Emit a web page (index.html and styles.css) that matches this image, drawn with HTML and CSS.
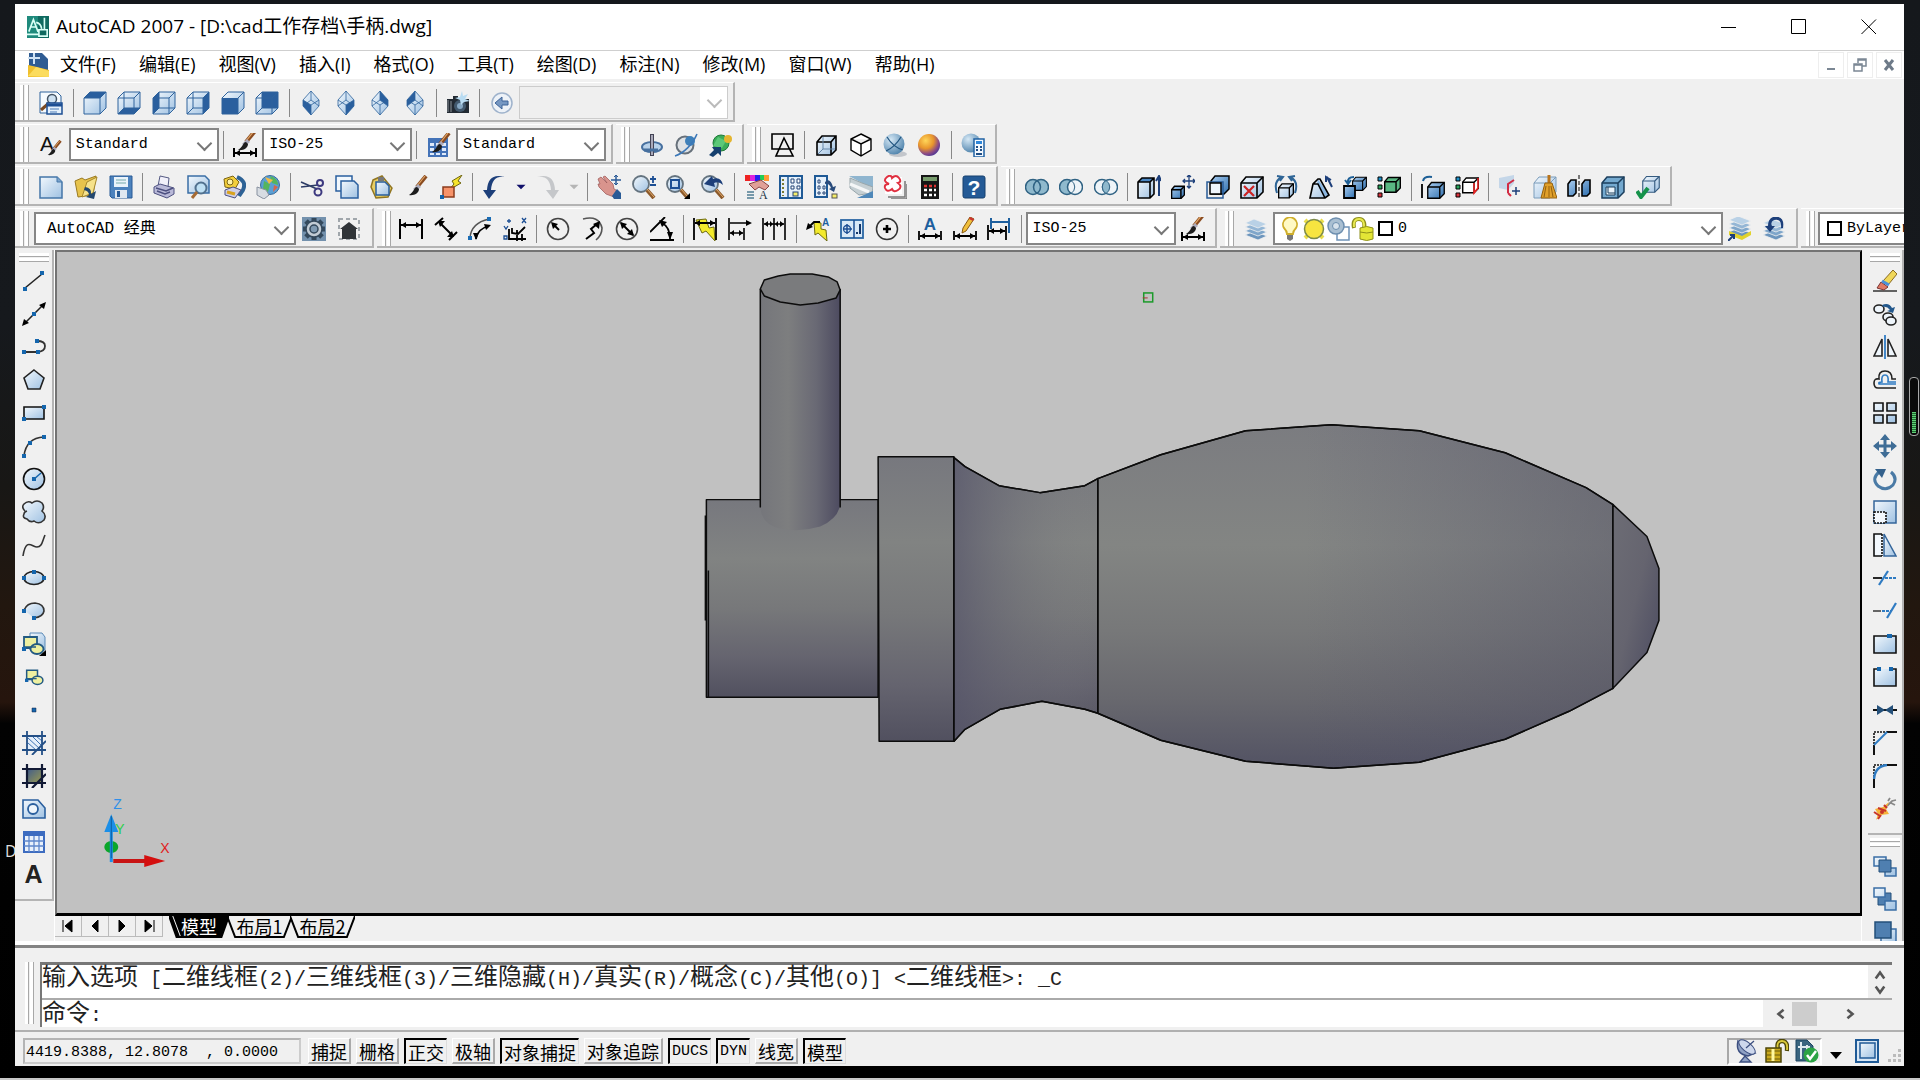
FILE: index.html
```html
<!DOCTYPE html>
<html lang="zh-CN">
<head>
<meta charset="utf-8">
<title>AutoCAD 2007</title>
<link rel="stylesheet" href="styles.css">
</head>
<body>
<svg class="sprite" aria-hidden="true">
<defs>
<linearGradient id="g" x1="0" y1="0" x2="1" y2="1"><stop offset="0" stop-color="#f2f8fd"/><stop offset="1" stop-color="#9fc1e2"/></linearGradient>
<linearGradient id="gb" x1="0" y1="0" x2="1" y2="1"><stop offset="0" stop-color="#a9cdf0"/><stop offset="1" stop-color="#2f6fae"/></linearGradient>
<radialGradient id="gs" cx=".35" cy=".3" r=".75"><stop offset="0" stop-color="#d5e8f5"/><stop offset="1" stop-color="#4f83ac"/></radialGradient>
<radialGradient id="go" cx=".35" cy=".3" r=".8"><stop offset="0" stop-color="#ffd75a"/><stop offset=".45" stop-color="#e8952c"/><stop offset=".75" stop-color="#8a4a86"/><stop offset="1" stop-color="#3a2f9a"/></radialGradient>
<linearGradient id="gh" x1="0" y1="0" x2="1" y2="1"><stop offset="0" stop-color="#4c6fb8"/><stop offset="1" stop-color="#f2e34a"/></linearGradient>
</defs>
<symbol id="cube" viewBox="0 0 24 24"><path d="M1 7 7 1H23V17L17 23H1Z" fill="url(#g)"/></symbol>
<symbol id="cubel" viewBox="0 0 24 24"><path d="M1 7 7 1H23V17L17 23H1ZM1 7H17V23M17 7 23 1M7 1V17H23M7 17 1 23" fill="none" stroke="#2f639c"/></symbol>
<symbol id="iso" viewBox="0 0 24 24"><path d="M12 0 20 9V15L12 24 4 15V9Z" fill="url(#g)"/></symbol>
<symbol id="isol" viewBox="0 0 24 24"><path d="M12 0 20 9V15L12 24 4 15V9ZM4 9 12 14 20 9M12 14V24M4 15 12 9 20 15M12 0V9" fill="none" stroke="#2f639c" stroke-width=".8"/></symbol>
<symbol id="v0" viewBox="0 0 24 24"><path d="M1 1H18L22 5V22H1Z" fill="#f5fafe" stroke="#2f639c"/><circle cx="13" cy="8" r="4.500" fill="#cfe2f2" stroke="#456" stroke-width="1.500"/><path d="M10 12 2 19" stroke="#7a4a22" stroke-width="3"/><path d="M8 12H23V23H8Z" fill="#e4f0fb" stroke="#1d4f94" stroke-width="1.500"/><path d="M8 14H23" stroke="#1d4f94" stroke-width="3"/><path d="M11 18H20M11 21H18" stroke="#4c7db8"/></symbol>
<symbol id="v1" viewBox="0 0 24 24"><use href="#cube"/><path d="M1 7 7 1H23L17 7Z" fill="#2a5f9e"/><path d="M1 7 7 1H23V17L17 23H1ZM1 7H17V23M17 7 23 1" fill="none" stroke="#2f639c"/></symbol>
<symbol id="v2" viewBox="0 0 24 24"><use href="#cube"/><path d="M1 23 7 17H23L17 23Z" fill="#2a5f9e"/><use href="#cubel"/></symbol>
<symbol id="v3" viewBox="0 0 24 24"><use href="#cube"/><path d="M1 7 7 1V17L1 23Z" fill="#2a5f9e"/><use href="#cubel"/></symbol>
<symbol id="v4" viewBox="0 0 24 24"><use href="#cube"/><path d="M17 7 23 1V17L17 23Z" fill="#2a5f9e"/><use href="#cubel"/></symbol>
<symbol id="v5" viewBox="0 0 24 24"><use href="#cube"/><path d="M1 7H17V23H1Z" fill="#2a5f9e"/><path d="M1 7 7 1H23V17L17 23H1ZM17 7V23M17 7 23 1" fill="none" stroke="#2f639c"/></symbol>
<symbol id="v6" viewBox="0 0 24 24"><use href="#cube"/><path d="M7 1H23V17H7Z" fill="#2a5f9e"/><use href="#cubel"/></symbol>
<symbol id="v7" viewBox="0 0 24 24"><use href="#iso"/><path d="M4 9 12 14V24L4 15Z" fill="#2a5f9e"/><use href="#isol"/></symbol>
<symbol id="v8" viewBox="0 0 24 24"><use href="#iso"/><path d="M20 9 12 14V24L20 15Z" fill="#2a5f9e"/><use href="#isol"/></symbol>
<symbol id="v9" viewBox="0 0 24 24"><use href="#iso"/><path d="M12 0 20 9V15L12 9Z" fill="#2a5f9e"/><use href="#isol"/></symbol>
<symbol id="v10" viewBox="0 0 24 24"><use href="#iso"/><path d="M12 0 4 9V15L12 9Z" fill="#2a5f9e"/><use href="#isol"/></symbol>
<symbol id="cam" viewBox="0 0 24 24"><path d="M1 8H7V5H12V8H23V22H1Z" fill="#222a33"/><path d="M2 9V21M5 10V21" stroke="#8b9299"/><circle cx="14" cy="15" r="6" fill="#42596e"/><circle cx="14" cy="15" r="3" fill="#86a8c4"/><path d="M16 0 17 5 22 3 19 8 24 10 18 11 15 14 14 9 9 7 14 6Z" fill="#b9dcf2"/></symbol>
<symbol id="prev" viewBox="0 0 24 24"><circle cx="12" cy="12" r="10" fill="#edf2f8" stroke="#9fb3cc" stroke-width="1.500"/><path d="M5 12 12 6V10H18V14H12V18Z" fill="#7597c2" stroke="#3d6398"/></symbol>
<symbol id="brush" viewBox="0 0 24 24"><path d="M22 1 13 12" stroke="#8a4b1f" stroke-width="4"/><path d="M21 1 13 11" stroke="#e3a869" stroke-width="1.200"/><path d="M14 9 17 12 12 16 9 14Z" fill="#aab"/><path d="M13 12C10 12 10 17 5 20 10 21 15 18 15 14Z" fill="#1d1d1d"/></symbol>
<symbol id="dstyle" viewBox="0 0 24 24"><use href="#brush" y="-3"/><path d="M1 15V24M23 15V24M2 20H22" stroke="#000" stroke-width="2"/><path d="M2 20 7 17V23ZM22 20 17 17V23Z"/></symbol>
<symbol id="tbstyle" viewBox="0 0 24 24"><rect x="1" y="5" width="20" height="19" fill="#4473b8"/><path d="M3 10H7V13H3ZM9 10H13V13H9ZM15 10H19V13H15ZM3 15H7V18H3ZM9 15H13V18H9ZM15 15H19V18H15ZM3 20H7V22H3ZM9 20H13V22H9ZM15 20H19V22H15Z" fill="#dfeafa"/><use href="#brush" y="-1"/></symbol>
<symbol id="orb1" viewBox="0 0 24 24"><ellipse cx="12" cy="14" rx="10" ry="5" fill="#b9d2ea" stroke="#47709f" stroke-width="2"/><path d="M12 1V23" stroke="#445" stroke-width="4"/><path d="M12 2V22" stroke="#ccd" stroke-width="1.500"/><path d="M4 17H18" stroke="#47709f" stroke-width="3"/></symbol>
<symbol id="orb2" viewBox="0 0 24 24"><circle cx="11" cy="12" r="8.500" fill="#dde1e5" stroke="#66707a" stroke-width="2"/><circle cx="16" cy="8" r="5" fill="#3d7fb9"/><path d="M1 23C10 20 19 11 23 1" fill="none" stroke="#3c78b8" stroke-width="1.500"/></symbol>
<symbol id="orb3" viewBox="0 0 24 24"><circle cx="13" cy="10" r="8" fill="#3bad59" stroke="#1f7a3a"/><path d="M5 13 10 4 18 8 14 15Z" fill="#5cc878"/><circle cx="20" cy="6" r="4" fill="#e4b530"/><path d="M1 22 6 17 4 14H13V23L10 20 5 24Z" fill="#16406f"/></symbol>
<symbol id="s2d" viewBox="0 0 24 24"><path d="M1 1H22V16H1ZM13 5 22 23H5Z" fill="none" stroke="#000" stroke-width="1.600"/></symbol>
<symbol id="s3d" viewBox="0 0 24 24"><path d="M3 9 8 3H22V17L17 22H3Z" fill="url(#g)"/><path d="M3 9 8 3H22V17L17 22H3ZM3 9H17V22M17 9 22 3" fill="none" stroke="#000" stroke-width="1.600"/><path d="M9 4V16H21M9 16 4 21" stroke="#68a" fill="none"/></symbol>
<symbol id="shid" viewBox="0 0 24 24"><path d="M12 1 22 6V17L12 23 2 17V6ZM2 6 12 11 22 6M12 11V23" fill="#fff" stroke="#000" stroke-width="1.400"/></symbol>
<symbol id="sreal" viewBox="0 0 24 24"><ellipse cx="15" cy="21" rx="9" ry="3" fill="#c3c6cb"/><circle cx="11" cy="11" r="10.500" fill="url(#gs)"/><path d="M4 4Q10 14 20 17M18 4Q12 14 3 18" fill="none" stroke="#20547f" stroke-width="1.200"/></symbol>
<symbol id="scon" viewBox="0 0 24 24"><circle cx="12" cy="12" r="11" fill="url(#go)"/></symbol>
<symbol id="sman" viewBox="0 0 24 24"><circle cx="10" cy="10" r="9.500" fill="url(#gs)"/><rect x="13" y="6" width="10" height="18" fill="#f4f9ff" stroke="#1f62a4" stroke-width="1.500"/><rect x="15" y="8" width="6" height="3" fill="#2e86d8"/><path d="M15 14H17M19 14H21M15 17H17M19 17H21M15 21H21" stroke="#1f4f86" stroke-width="2"/></symbol>
<symbol id="new" viewBox="0 0 24 24"><path d="M1 2H18L23 7V23H1Z" fill="url(#g)" stroke="#4476a8" stroke-width="1.500"/><path d="M18 2V7H23" fill="#7aa3cc" stroke="#4476a8"/></symbol>
<symbol id="open" viewBox="0 0 24 24"><path d="M4 22 1 6 8 3 11 5 22 1 19 20Z" fill="#e7c34c" stroke="#9a7a22"/><path d="M8 22 13 7 23 2 19 18Z" fill="#f6e28b" stroke="#a5872c"/><path d="M11 12Q18 13 17 19L22 16 20 24 12 22 15 20Q15 16 10 15Z" fill="#23486f"/></symbol>
<symbol id="save" viewBox="0 0 24 24"><path d="M1 1H23V23H3L1 21Z" fill="#4c82bd" stroke="#285b96"/><rect x="5" y="2" width="14" height="10" fill="#eaf3fb"/><path d="M7 5H17M7 8H17" stroke="#7aa"/><rect x="6" y="15" width="12" height="8" fill="#dfe8f1"/><rect x="8" y="16" width="3" height="6" fill="#285b96"/></symbol>
<symbol id="print" viewBox="0 0 24 24"><path d="M6 11 8 1 17 3 16 12Z" fill="#f1f0fa" stroke="#555a83"/><path d="M2 12 8 9 22 13V19L15 23 2 18Z" fill="#b9b9d8" stroke="#4d5080"/><path d="M5 16 13 19 18 17M4 13 14 16 21 13" fill="none" stroke="#4d5080" stroke-width="1.500"/></symbol>
<symbol id="preview" viewBox="0 0 24 24"><path d="M1 1H18L22 5V18H1Z" fill="url(#g)" stroke="#3a6ea5" stroke-width="1.500"/><circle cx="14" cy="13" r="5.500" fill="#bfe0f4" stroke="#51718f" stroke-width="2"/><path d="M10 17 5 23" stroke="#a66a33" stroke-width="3"/></symbol>
<symbol id="publish" viewBox="0 0 24 24"><path d="M2 4 11 1 17 7 13 14 3 12Z" fill="#f3cf3c" stroke="#7b6414"/><circle cx="8" cy="7" r="3" fill="#fff3a8" stroke="#7b6414"/><path d="M15 2Q25 6 21 15L17 21" fill="none" stroke="#2d6295" stroke-width="4"/><path d="M3 15 11 12 19 15 13 23 3 20Z" fill="#cfcfe6" stroke="#4c5080"/><path d="M5 17 13 19" stroke="#d9a21e" stroke-width="3"/></symbol>
<symbol id="globe" viewBox="0 0 24 24"><circle cx="14" cy="10" r="9.500" fill="#5a9fd4" stroke="#3a6c9c"/><path d="M14 1Q22 3 22 10L16 8ZM8 6 14 9 12 17 7 14Z" fill="#55b55d"/><path d="M9 2 17 5 13 9Z" fill="#f0ba47"/><path d="M18 10 22 12 17 17Z" fill="#d9644a"/><path d="M1 12 10 15 13 20 8 24 1 20Z" fill="#d7dce2" stroke="#8992a0"/></symbol>
<symbol id="cut" viewBox="0 0 24 24"><path d="M1 7 17 14M1 12 18 10" stroke="#2d3c66" stroke-width="1.600"/><circle cx="20" cy="8" r="3" fill="none" stroke="#3d3a80" stroke-width="2"/><circle cx="18" cy="17" r="3.500" fill="none" stroke="#3d3a80" stroke-width="2"/></symbol>
<symbol id="copy" viewBox="0 0 24 24"><path d="M1 1H17V16H1Z" fill="#f2f8fd" stroke="#2a5f9e" stroke-width="1.500"/><path d="M6 6H19L23 10V23H6Z" fill="url(#g)" stroke="#2a5f9e" stroke-width="1.500"/></symbol>
<symbol id="paste" viewBox="0 0 24 24"><path d="M3 5 12 1 22 13 18 22 6 23 1 12Z" fill="#e9cf63" stroke="#917521" stroke-width="1.500"/><path d="M8 2H14V6H8Z" fill="#777"/><path d="M6 7H15L19 11V20H6Z" fill="url(#g)" stroke="#2a5f9e" stroke-width="1.500"/></symbol>
<symbol id="block" viewBox="0 0 24 24"><path d="M23 0 13 6 15 9 10 15 22 8 19 6Z" fill="#f7e42c" stroke="#6e6410"/><rect x="4" y="12" width="11" height="10" fill="#f7936a" stroke="#8a3b1c" stroke-width="1.500"/><rect x="1" y="20" width="4" height="4" fill="#1563a8"/></symbol>
<symbol id="undo" viewBox="0 0 24 24"><path d="M22 2Q9 0 8 15H13L6 24 0 15H4Q5-3 22 2Z" fill="#1d3f7a"/></symbol>
<symbol id="redo" viewBox="0 0 24 24"><path d="M2 2Q15 0 16 15H11L18 24 24 15H20Q19-3 2 2Z" fill="#c5c7ca"/></symbol>
<symbol id="drop" viewBox="0 0 24 24"><path d="M6 9H18L12 15Z" fill="currentColor"/></symbol>
<symbol id="pan" viewBox="0 0 24 24"><path d="M1 4 4 2 10 8 6 2 8 1 16 9 17 14 21 16 17 22 9 19 2 12 1 9 3 9Z" fill="#d9948d" stroke="#955" stroke-width=".7"/><path d="M15 21 20 14 24 18V24H17Z" fill="#2a5a96"/><path d="M19 0V10M14 5H24" stroke="#2a5a96" stroke-width="1.500"/><path d="M17 2 19 0 21 2M17 8 19 10 21 8" fill="none" stroke="#2a5a96"/></symbol>
<symbol id="mag" viewBox="0 0 24 24"><circle cx="9" cy="9" r="8" fill="url(#g)" stroke="#64737f" stroke-width="1.800"/><path d="M15 15 22 23" stroke="#8d5a2b" stroke-width="4"/><path d="M15 14 22 22" stroke="#e2ae6f" stroke-width="1"/></symbol>
<symbol id="zrt" viewBox="0 0 24 24"><use href="#mag"/><path d="M21 1V8M18 4H24M18 10H24" stroke="#1d4f94" stroke-width="1.800"/></symbol>
<symbol id="zwin" viewBox="0 0 24 24"><use href="#mag"/><rect x="5" y="5" width="8" height="8" fill="none" stroke="#1d4f94" stroke-width="2"/><path d="M24 18V24H18Z"/></symbol>
<symbol id="zprev" viewBox="0 0 24 24"><use href="#mag"/><path d="M22 10Q20 1 12 4L11 1 3 9 14 12 13 8Q18 6 22 10Z" fill="#1d3f7a"/></symbol>
<symbol id="props" viewBox="0 0 24 24"><path d="M0 0H5V6H0Z" fill="#e22"/><path d="M5 0H10V6H5Z" fill="#d2d"/><path d="M10 0H15V6H10Z" fill="#22e"/><path d="M15 0H20V5H15Z" fill="#2c5"/><path d="M19 0H24V6H19Z" fill="#f93"/><path d="M4 9 16 5 24 11 20 15 14 12 10 15Z" fill="#e0a097" stroke="#844"/><path d="M2 17H9M2 20H9M2 23H9" stroke="#79a" stroke-width="2"/></symbol>
<symbol id="dc" viewBox="0 0 24 24"><rect x="1" y="1" width="22" height="22" fill="#e6f0fa" stroke="#1f5a96" stroke-width="2"/><path d="M9 1V23" stroke="#1f5a96" stroke-width="1.500"/><path d="M4 4V21" stroke="#7a7a30" stroke-width="2" stroke-dasharray="2 2"/><path d="M12 4H15V8H12ZM18 4H21V8H18ZM12 11H15V14H12ZM18 11H21V14H18Z" fill="#fff" stroke="#247"/><rect x="14" y="17" width="5" height="4" fill="#f6ee6a" stroke="#247"/></symbol>
<symbol id="tp" viewBox="0 0 24 24"><rect x="1" y="1" width="12" height="21" fill="#e6f0fa" stroke="#1f5a96" stroke-width="2"/><path d="M4 5H6V8H4ZM4 11H6V14H4ZM4 17H6V19H4ZM9 11H11V14H9ZM9 17H11V19H9Z" fill="#fff" stroke="#247"/><path d="M11 7Q16 2 19 12L22 11 20 17 15 14 17 13Q15 8 11 9Z" fill="#2a4c7c"/><rect x="18" y="19" width="5" height="4" fill="#f6ee6a" stroke="#555"/></symbol>
<symbol id="ssm" viewBox="0 0 24 24"><path d="M0 1H24V14Z" fill="#8fb5cf"/><path d="M1 3 13 8 24 12 23 18 10 20 1 13Z" fill="#c5cfd3" stroke="#98a6ab"/><path d="M1 9 20 17" stroke="#f4f6f7" stroke-width="3"/><path d="M8 23H24V16Z" fill="#4f88b9"/></symbol>
<symbol id="markup" viewBox="0 0 24 24"><path d="M5 22H22V6M8 24H24V9" fill="none" stroke="#777" stroke-width="1.500"/><rect x="2" y="2" width="17" height="17" fill="#fff"/><path d="M4 2Q8-1 9 3 13-1 16 3 19 7 15 8 20 12 15 15 11 18 9 14 4 18 2 13 1 9 6 9-1 6 4 2Z" fill="#fff" stroke="#e03040" stroke-width="2"/></symbol>
<symbol id="calc" viewBox="0 0 24 24"><rect x="3" y="0" width="18" height="24" fill="#161616"/><rect x="5" y="2" width="14" height="4" fill="#779c6c"/><path d="M6 11H9M11 11H14M16 11H18" stroke="#d33" stroke-width="2.500"/><path d="M6 15H9M11 15H14M16 15H18M6 20H9M11 20H14M16 20H18" stroke="#fff" stroke-width="2.500"/></symbol>
<symbol id="help" viewBox="0 0 24 24"><rect x="1" y="1" width="22" height="22" rx="2" fill="#245a96" stroke="#16406f"/></symbol>
<symbol id="uni" viewBox="0 0 24 24"><circle cx="8" cy="12" r="7.500" fill="#8fb9cd"/><circle cx="16" cy="12" r="7.500" fill="#8fb9cd"/><circle cx="8" cy="12" r="7.500" fill="none" stroke="#2f6283" stroke-width="1.500"/><circle cx="16" cy="12" r="7.500" fill="none" stroke="#2f6283" stroke-width="1.500"/></symbol>
<symbol id="sub" viewBox="0 0 24 24"><circle cx="8" cy="12" r="7.500" fill="#8fb9cd" stroke="#2f6283" stroke-width="1.500"/><circle cx="16" cy="12" r="7.500" fill="#eef4f8" stroke="#2f6283" stroke-width="1.500"/><path d="M12 5.500A7.500 7.500 0 0 1 12 18.500" fill="none" stroke="#2f6283"/></symbol>
<symbol id="inter" viewBox="0 0 24 24"><circle cx="8" cy="12" r="7.500" fill="#eef4f8" stroke="#2f6283" stroke-width="1.500"/><circle cx="16" cy="12" r="7.500" fill="#eef4f8" stroke="#2f6283" stroke-width="1.500"/><path d="M12 5.500A7.500 7.500 0 0 1 12 18.500 7.500 7.500 0 0 1 12 5.500Z" fill="#8fb9cd" stroke="#2f6283"/></symbol>
<symbol id="c" viewBox="0 0 24 24"><path d="M1 8 6 2H23V17L17 23H1Z"/><path d="M1 8H17V23M17 8 23 2" fill="none"/></symbol>
<symbol id="ext" viewBox="0 0 24 24"><path d="M1 7 5 3H17V19L13 23H1Z" fill="url(#g)"/><path d="M1 7 5 3H17L13 7Z" fill="#4a87c4"/><path d="M1 7 5 3H17V19L13 23H1ZM1 7H13V23M13 7 17 3" fill="none" stroke="#000" stroke-width="1.600"/><path d="M22 21V1M19 6 22 1 24 6" fill="none" stroke="#1d3f7a" stroke-width="2"/></symbol>
<symbol id="mvf" viewBox="0 0 24 24"><g fill="url(#gb)" stroke="#000" stroke-width="2.500"><use href="#c" x="0" y="10" width="14" height="14"/></g><path d="M18 0V13M12 6H24M16 2 18 0 20 2M16 11 18 13 20 11M14 4 12 6 14 8M22 4 24 6 22 8" fill="none" stroke="#1d3f7a" stroke-width="1.300"/></symbol>
<symbol id="off" viewBox="0 0 24 24"><path d="M5 6 9 1H23V14L18 19H5Z" fill="url(#gb)" stroke="#000" stroke-width="1.500"/><path d="M1 7H17V23H1Z" fill="none" stroke="#285b96" stroke-width="1.500"/><path d="M4 8H15V19H4Z" fill="#eef5fc" stroke="#000" stroke-width="1.500"/></symbol>
<symbol id="del" viewBox="0 0 24 24"><g fill="url(#g)" stroke="#000" stroke-width="1.600"><use href="#c"/></g><path d="M4 11 14 21M14 11 4 21" stroke="#c22" stroke-width="2.200"/></symbol>
<symbol id="rotf" viewBox="0 0 24 24"><g fill="url(#g)" stroke="#000" stroke-width="2"><use href="#c" x="4" y="7" width="16" height="17"/></g><path d="M8 2Q-1 6 3 18M16 2Q25 6 21 18M3 1 9 2 6 6M21 1 15 2 18 6" fill="none" stroke="#2f6596" stroke-width="2"/></symbol>
<symbol id="tap" viewBox="0 0 24 24"><path d="M1 23 4 9 9 4 20 20 16 23Z" fill="url(#g)"/><path d="M9 4 20 20 16 23 8 9Z" fill="#8db8e2"/><path d="M1 23 4 9 9 4H11L20 20 16 23ZM4 9H9L16 23" fill="none" stroke="#000" stroke-width="1.600"/><path d="M23 12 18 2M17 7 17 2 22 5" fill="none" stroke="#1d3f7a" stroke-width="2"/></symbol>
<symbol id="cpf" viewBox="0 0 24 24"><g fill="url(#gb)" stroke="#000" stroke-width="1.800"><use href="#c" x="9" y="1" width="15" height="15"/><path d="M1 11H12V23H1Z"/></g><path d="M11 2Q4 2 5 8M2 5 5 9 8 5" fill="none" stroke="#1d5f96" stroke-width="2"/></symbol>
<symbol id="rgb" viewBox="0 0 24 24"><path d="M1 2H5V6H1Z" fill="#1e90c8" stroke="#000"/><path d="M1 10H5V14H1Z" fill="#27a55b" stroke="#000"/><path d="M1 18H5V22H1Z" fill="#d8323c" stroke="#000"/></symbol>
<symbol id="clf" viewBox="0 0 24 24"><use href="#rgb"/><g fill="#5ab883" stroke="#000" stroke-width="2"><use href="#c" x="7" y="1" width="17" height="17"/></g></symbol>
<symbol id="cpe" viewBox="0 0 24 24"><g fill="url(#gb)" stroke="#000" stroke-width="1.800"><use href="#c" x="6" y="6" width="18" height="18"/></g><path d="M1 9V23" stroke="#000" stroke-width="1.800"/><path d="M11 2Q3 1 2 6" fill="none" stroke="#1d5f96" stroke-width="2"/></symbol>
<symbol id="cle" viewBox="0 0 24 24"><use href="#rgb"/><g fill="#fff" stroke="#000" stroke-width="2"><use href="#c" x="7" y="1" width="17" height="18"/></g><path d="M19 8V18L23 13V3" stroke="#e22" stroke-width="1.500" fill="none"/></symbol>
<symbol id="imp" viewBox="0 0 24 24"><path d="M1 3 16 0V8L10 15 1 13Z" fill="#b9cfe6" opacity=".8"/><path d="M10 18V9L16 5M10 18 13 21" fill="none" stroke="#d22c44" stroke-width="2"/><path d="M18 12V20M14 16H22" stroke="#1d3f7a" stroke-width="1.500"/></symbol>
<symbol id="clean" viewBox="0 0 24 24"><g fill="url(#g)" stroke="#7b9cba"><use href="#c"/></g><path d="M16 0V8" stroke="#b8741c" stroke-width="3"/><path d="M12 8H19L24 23H8Z" fill="#e0a02a" stroke="#94600e"/><path d="M13 11 11 22M16 11V22M18 11 20 22" stroke="#94600e"/></symbol>
<symbol id="sep" viewBox="0 0 24 24"><path d="M1 9 4 5H9V18L6 21H1ZM15 9 18 5H23V18L20 21H15Z" fill="url(#gb)" stroke="#000" stroke-width="1.600"/><path d="M12 0V24" stroke="#000" stroke-dasharray="4 2"/></symbol>
<symbol id="shell" viewBox="0 0 24 24"><g fill="#74a9cf" stroke="#1b3e5c" stroke-width="1.500"><use href="#c"/></g><path d="M5 12H14V20H5Z" fill="#e9f3fa" stroke="#1b3e5c"/><path d="M7 12V18H14" fill="none" stroke="#1b3e5c"/></symbol>
<symbol id="check" viewBox="0 0 24 24"><g fill="url(#g)" stroke="#355b80" stroke-width="1.500"><use href="#c" x="6" y="0" width="18" height="18"/></g><path d="M1 16 5 22 12 13" fill="none" stroke="#15924a" stroke-width="4"/></symbol>
<symbol id="gear" viewBox="0 0 24 24"><rect width="24" height="24" fill="#7391ad"/><path d="M12 1V23M1 12H23M4 4 20 20M20 4 4 20" stroke="#34495c" stroke-width="5"/><circle cx="12" cy="12" r="8" fill="#c2ccd5" stroke="#34495c" stroke-width="1.500"/><circle cx="12" cy="12" r="4" fill="#7f9ab2" stroke="#34495c" stroke-width="1.500"/></symbol>
<symbol id="home" viewBox="0 0 24 24"><path d="M2 2H22V22H2Z" fill="none" stroke="#a0a6ab" stroke-width="2" stroke-dasharray="4 3"/><path d="M3 12 12 5 21 12H19V22H5V12Z" fill="#303438"/></symbol>
<symbol id="dlin" viewBox="0 0 24 24"><path d="M1 2V22M23 2V22M2 8H22" stroke="#000" stroke-width="2"/><path d="M2 8 7 5V11ZM22 8 17 5V11Z"/></symbol>
<symbol id="dali" viewBox="0 0 24 24"><path d="M1 8 9 1M15 23 23 15M6 6 18 18" stroke="#000" stroke-width="2"/><path d="M4 4H11L6 10ZM20 20H13L18 14Z"/></symbol>
<symbol id="darc" viewBox="0 0 24 24"><path d="M2 21Q3 6 21 2" fill="none" stroke="#555" stroke-width="1.500"/><path d="M8 22Q9 12 21 9" fill="none" stroke="#000" stroke-width="1.800"/><path d="M5 16H11L8 23ZM16 7 23 8 18 13Z"/><path d="M0 19H4V23H0ZM19 0H23V4H19Z" fill="#1a6cb5"/></symbol>
<symbol id="dord" viewBox="0 0 24 24"><path d="M6 12V22H23M9 11V16L15 17 22 10M14 13V24M19 17V24" fill="none" stroke="#000" stroke-width="1.800"/><path d="M6 2V6M4 4H8M19 1 23 6M23 1 19 6M1 9 3 12 5 9M1 19H4V22H1Z" fill="none" stroke="#1d4f94" stroke-width="1.300"/></symbol>
<symbol id="drad" viewBox="0 0 24 24"><circle cx="12" cy="12" r="10.500" fill="none" stroke="#444" stroke-width="1.600"/><path d="M13 13 7 7" stroke="#000" stroke-width="2"/><path d="M5 5 12 7 7 12Z"/></symbol>
<symbol id="djog" viewBox="0 0 24 24"><path d="M2 2Q18-2 21 11 21 18 15 23" fill="none" stroke="#555" stroke-width="1.600"/><path d="M5 22 13 16 10 12 16 7" fill="none" stroke="#000" stroke-width="2"/><path d="M19 4 18 12 12 7Z"/></symbol>
<symbol id="ddia" viewBox="0 0 24 24"><circle cx="12" cy="12" r="10.500" fill="none" stroke="#444" stroke-width="1.600"/><path d="M6 6 18 18" stroke="#000" stroke-width="2"/><path d="M5 5 12 7 7 12ZM19 19 12 17 17 12Z"/></symbol>
<symbol id="dang" viewBox="0 0 24 24"><path d="M0 23H24M0 15 15 0" stroke="#000" stroke-width="1.800"/><path d="M12 6Q20 10 20 22" fill="none" stroke="#000" stroke-width="1.600"/><path d="M9 3 17 5 12 10ZM17 15H23L20 23Z"/></symbol>
<symbol id="dq" viewBox="0 0 24 24"><path d="M3 3 13 2 16 11 21 10 22 24 13 14 9 16Z" fill="#f3ea2c" stroke="#6d6a10"/><path d="M1 1V23M23 1V23M2 6H22" stroke="#000" stroke-width="1.800"/><path d="M2 6 7 3V9ZM22 6 17 3V9Z"/></symbol>
<symbol id="dbas" viewBox="0 0 24 24"><path d="M1 1V23M16 11V23M2 6H22M2 16H15" stroke="#000" stroke-width="1.600"/><path d="M24 6 18 3V9ZM2 16 6 13V19ZM15 16 11 13V19Z"/></symbol>
<symbol id="dcon" viewBox="0 0 24 24"><path d="M1 1V23M12 1V23M23 1V23M2 7H22" stroke="#000" stroke-width="1.600"/><path d="M2 7 6 4V10ZM11 7 8 4V10ZM13 7 16 4V10ZM22 7 18 4V10Z"/></symbol>
<symbol id="lead" viewBox="0 0 24 24"><path d="M8 5 15 6 15 12 20 13 21 24 12 16 9 18Z" fill="#f3ea2c" stroke="#6d6a10"/><path d="M3 10 8 5H14" fill="none" stroke="#000" stroke-width="1.800"/><path d="M0 13 2 6 7 10Z"/></symbol>
<symbol id="tol" viewBox="0 0 24 24"><rect x="1" y="3" width="22" height="18" fill="#d9e9f7" stroke="#2a66a4" stroke-width="1.800"/><path d="M14 3V21M3 12H12M7 7V17" stroke="#1d4f94" stroke-width="1.500"/><circle cx="7" cy="12" r="3.500" fill="none" stroke="#1d4f94" stroke-width="1.300"/><path d="M17 15V17M20 7V17" stroke="#14376a" stroke-width="2"/></symbol>
<symbol id="cmk" viewBox="0 0 24 24"><circle cx="12" cy="12" r="10.500" fill="none" stroke="#333" stroke-width="1.500"/><path d="M12 8V16M8 12H16" stroke="#000" stroke-width="2.600"/></symbol>
<symbol id="db" viewBox="0 0 24 24"><path d="M1 14V23M23 14V23M2 19H22" stroke="#000" stroke-width="1.800"/><path d="M2 19 7 16V22ZM22 19 17 16V22Z"/></symbol>
<symbol id="dte" viewBox="0 0 24 24"><use href="#db"/><path d="M9 16 10 11 17 0 21 2 13 14Z" fill="#f0bf3d" stroke="#8a5a10"/><path d="M17 0 21 2 20 4 16 2Z" fill="#c33"/></symbol>
<symbol id="dup" viewBox="0 0 24 24"><path d="M4 1V12M22 1V16M5 5H22" stroke="#1d5f9e" stroke-width="2"/><path d="M1 8V23M19 9V23M2 14H18" stroke="#000" stroke-width="1.800"/><path d="M2 14 7 11V17ZM18 14 13 11V17Z"/></symbol>
<symbol id="lay" viewBox="0 0 24 24"><path d="M1 18 10 14 23 19 14 23Z" fill="#6c95bd" stroke="#f0f0f0" stroke-width=".8"/><path d="M1 14 10 10 23 15 14 19Z" fill="#7fa6ca" stroke="#f0f0f0" stroke-width=".8"/><path d="M1 10 10 6 23 11 14 15Z" fill="#94b6d5" stroke="#f0f0f0" stroke-width=".8"/><path d="M1 6 10 2 23 7 14 11Z" fill="#b9d1e6" stroke="#f0f0f0" stroke-width=".8"/></symbol>
<symbol id="laym" viewBox="0 0 24 24"><use href="#lay" y="-3"/><path d="M1 14 14 19 23 14V18L14 23 1 18Z" fill="#e2d22c"/><path d="M0 24 6 18M2 18H6V22" stroke="#1d3f7a" stroke-width="2" fill="none"/></symbol>
<symbol id="layp" viewBox="0 0 24 24"><use href="#lay"/><path d="M19 11Q20 1 12 3 8 5 10 9H13L8 15 3 9H6Q6 2 11 0 23-2 21 11Z" fill="#1d3f7a"/></symbol>
<symbol id="bulb" viewBox="0 0 24 24"><path d="M9 17Q9 14 6 11A7 7 0 1 1 18 11Q15 14 15 17Z" fill="#fff9c4" stroke="#cfae2b" stroke-width="1.800"/><path d="M9 18H15V22L12 24 9 22Z" fill="#777"/></symbol>
<symbol id="sun" viewBox="0 0 24 24"><path d="M3 3 21 21M21 3 3 21" stroke="#e8dc4a" stroke-width="4"/><circle cx="12" cy="12" r="9.500" fill="#f7e440" stroke="#7c8a4a" stroke-width="1.500"/></symbol>
<symbol id="fvp" viewBox="0 0 24 24"><path d="M11 10H23V23H11Z" fill="#fff" stroke="#6f93b8" stroke-width="1.500"/><circle cx="10" cy="9" r="8" fill="#a9bfd2" stroke="#6e8faf" stroke-width="1.500"/><circle cx="10" cy="9" r="3.500" fill="#d7e2ec" stroke="#6e8faf"/></symbol>
<symbol id="lock" viewBox="0 0 24 24"><path d="M4 11Q2 2 9 2T14 13" fill="none" stroke="#8f901a" stroke-width="4"/><path d="M4 10Q3 2 9 2T14 12" fill="none" stroke="#e9ea52" stroke-width="2"/><path d="M10 11Q17 8 23 11V22Q17 25 10 22Z" fill="#e3e536" stroke="#8f901a"/><path d="M10 15Q17 17 23 15" fill="none" stroke="#8f901a"/></symbol>
<symbol id="line" viewBox="0 0 24 24"><path d="M3 19 20 5" stroke="#222" stroke-width="1.600"/><path d="M1 18H5V22H1ZM18 2H22V6H18Z" fill="#1566ad"/></symbol>
<symbol id="xline" viewBox="0 0 24 24"><path d="M2 22 22 2" stroke="#222" stroke-width="1.600"/><path d="M0 24 2 17 7 21ZM24 0 17 3 22 7Z"/><path d="M10 10H14V14H10Z" fill="#1566ad"/></symbol>
<symbol id="pline" viewBox="0 0 24 24"><path d="M2 17H16M15 6Q23 6 23 11 23 16 16 17" fill="none" stroke="#333" stroke-width="1.800"/><path d="M0 15H4V19H0ZM14 15H18V19H14ZM13 4H17V8H13Z" fill="#1566ad"/></symbol>
<symbol id="poly" viewBox="0 0 24 24"><path d="M12 2 22 10 18 21H6L2 10Z" fill="url(#g)" stroke="#222" stroke-width="1.600"/></symbol>
<symbol id="rect" viewBox="0 0 24 24"><path d="M2 6H22V18H2Z" fill="url(#g)" stroke="#111" stroke-width="1.600"/><path d="M0 16H4V20H0ZM20 4H24V8H20Z" fill="#1566ad"/></symbol>
<symbol id="arc" viewBox="0 0 24 24"><path d="M2 22Q4 4 22 3" fill="none" stroke="#333" stroke-width="1.600"/><path d="M0 20H4V24H0ZM6 7H10V11H6ZM20 1H24V5H20Z" fill="#1566ad"/></symbol>
<symbol id="circ" viewBox="0 0 24 24"><circle cx="12" cy="12" r="10.500" fill="url(#g)" stroke="#111" stroke-width="1.600"/><path d="M11 13 19 6" stroke="#1566ad" stroke-width="1.500"/><path d="M10 10H14V14H10Z" fill="#1566ad"/></symbol>
<symbol id="cloud" viewBox="0 0 24 24"><path d="M3 11Q-1 7 2 4 6 0 10 3 15-1 20 3 23 7 20 11 25 15 22 20 17 25 12 21 8 23 5 19 0 18 2 14 2 12 5 11" fill="url(#g)" stroke="#333" stroke-width="1.600"/></symbol>
<symbol id="spl" viewBox="0 0 24 24"><path d="M1 23C4 4 10 14 15 14S20 9 23 2" fill="none" stroke="#333" stroke-width="1.600"/></symbol>
<symbol id="ell" viewBox="0 0 24 24"><ellipse cx="12" cy="12" rx="10" ry="6.500" fill="url(#g)" stroke="#222" stroke-width="1.600"/><path d="M0 10H4V14H0ZM20 10H24V14H20ZM10 4H14V8H10Z" fill="#1566ad"/></symbol>
<symbol id="ella" viewBox="0 0 24 24"><path d="M2 11Q5 4 13 4 22 5 22 12 21 18 12 19" fill="url(#g)" stroke="#333" stroke-width="1.600"/><path d="M0 10H4V14H0ZM10 17H14V21H10Z" fill="#1566ad"/></symbol>
<symbol id="shp" viewBox="0 0 24 24"><path d="M2 4H15V15H2Z" fill="#eef0a0" stroke="#235a82" stroke-width="1.800"/><ellipse cx="15" cy="16" rx="6.500" ry="5" fill="#eef0a0" stroke="#235a82" stroke-width="1.800"/><path d="M2 14H14" stroke="#235a82" stroke-width="1.500"/><path d="M0 14H4V18H0Z" fill="#1566ad"/></symbol>
<symbol id="ins" viewBox="0 0 24 24"><path d="M8 1H20L23 5V18H8Z" fill="url(#g)" stroke="#5b8ab8"/><use href="#shp" y="1"/><path d="M24 18V24H17Z"/></symbol>
<symbol id="mk" viewBox="0 0 24 24"><use href="#shp" x="3" y="2" width="20" height="20"/></symbol>
<symbol id="pt" viewBox="0 0 24 24"><path d="M10 10H14V14H10Z" fill="#1566ad" stroke="#124" stroke-width=".5"/></symbol>
<symbol id="hat" viewBox="0 0 24 24"><path d="M5 5H20V19H5Z" fill="#e4eefa"/><path d="M6 7 18 18M6 12 14 19M10 5 19 14M14 5 20 10" stroke="#3f74b4"/><path d="M0 5H24M0 19H24M5 0V24M20 0V24M10 24 24 10" stroke="#234f86" stroke-width="1.800"/></symbol>
<symbol id="grad" viewBox="0 0 24 24"><path d="M5 5H20V19H5Z" fill="url(#gh)"/><path d="M5 5H20V19H5Z" fill="#345" opacity=".45"/><path d="M0 5H24M0 19H24M5 0V24M20 0V24M10 24 24 10" stroke="#121a35" stroke-width="2.200"/></symbol>
<symbol id="reg" viewBox="0 0 24 24"><path d="M1 3H16L23 11V21H1Z" fill="url(#g)" stroke="#2a5f9e" stroke-width="1.600"/><circle cx="11" cy="12" r="5" fill="#eef5fb" stroke="#2a5f9e" stroke-width="1.800"/></symbol>
<symbol id="tab" viewBox="0 0 24 24"><path d="M2 2H22V22H2Z" fill="#e9f1fb" stroke="#3d6cc0" stroke-width="2"/><path d="M2 4H22" stroke="#3d6cc0" stroke-width="4"/><path d="M2 11H22M2 16H22M7 6V22M12 6V22M17 6V22" stroke="#5f87cb" stroke-width="1.300"/></symbol>
<symbol id="erase" viewBox="0 0 24 24"><path d="M0 22H24" stroke="#333" stroke-width="1.500"/><path d="M10 12 20 1 24 5 15 16Z" fill="#f0d75a" stroke="#8a6a20"/><path d="M8 13 15 18 11 21 4 19Z" fill="#e07a64" stroke="#733"/><path d="M9 12 16 16" stroke="#4a90d9" stroke-width="3"/></symbol>
<symbol id="cpy" viewBox="0 0 24 24"><ellipse cx="6" cy="7" rx="5" ry="4" fill="#eef5fb" stroke="#222" stroke-width="1.600"/><ellipse cx="15" cy="15" rx="5" ry="4" fill="#eef5fb" stroke="#222" stroke-width="1.600"/><ellipse cx="18" cy="19" rx="5" ry="4" fill="#eef5fb" stroke="#222" stroke-width="1.600"/><path d="M9 3Q16 0 19 6L22 5 20 11 14 9 17 8Q14 4 10 5Z" fill="#23588c"/></symbol>
<symbol id="mir" viewBox="0 0 24 24"><path d="M9 4V21H1ZM15 4V21H23Z" fill="#eef5fb" stroke="#222" stroke-width="1.600"/><path d="M12 0V24" stroke="#2f7bc2" stroke-width="1.800"/></symbol>
<symbol id="offs" viewBox="0 0 24 24"><path d="M23 20H5Q1 20 1 15T6 11Q5 3 12 3T19 11H23" fill="none" stroke="#222" stroke-width="1.600"/><path d="M23 16H6Q5 14 9 14 8 7 12 7T15 14H23" fill="none" stroke="#2f7bc2" stroke-width="1.600"/></symbol>
<symbol id="arr" viewBox="0 0 24 24"><path d="M1 2H10V10H1ZM14 2H23V10H14ZM1 14H10V22H1ZM14 14H23V22H14Z" fill="url(#g)" stroke="#111" stroke-width="1.600"/></symbol>
<symbol id="move" viewBox="0 0 24 24"><path d="M12 2V22M2 12H22" stroke="#3f6d96" stroke-width="3"/><path d="M12 0 17 6H7ZM12 24 17 18H7ZM0 12 6 7V17ZM24 12 18 7V17Z" fill="#3f6d96"/></symbol>
<symbol id="rot" viewBox="0 0 24 24"><path d="M6 5Q-2 12 5 19 13 25 20 18 25 11 18 5" fill="none" stroke="#4a7aa5" stroke-width="3"/><path d="M2 2H13L9 11Z" fill="#34618c"/></symbol>
<symbol id="scl" viewBox="0 0 24 24"><path d="M1 1H23V23H1Z" fill="url(#g)" stroke="#34659a" stroke-width="1.500"/><path d="M1 12H13V23H1Z" fill="#f3f8fd" stroke="#111" stroke-width="1.600" stroke-dasharray="2 1"/></symbol>
<symbol id="str" viewBox="0 0 24 24"><path d="M11 1 23 23H11Z" fill="url(#g)" stroke="#34659a" stroke-width="1.500"/><path d="M9 1H1V23H9" fill="#f3f8fd" stroke="#111" stroke-width="1.600"/><path d="M9 1V23" stroke="#111" stroke-width="1.600" stroke-dasharray="2 1"/></symbol>
<symbol id="trim" viewBox="0 0 24 24"><path d="M0 12H9" stroke="#111" stroke-width="1.800"/><path d="M12 12H24" stroke="#2f7bc2" stroke-width="1.800" stroke-dasharray="3 1"/><path d="M6 19 15 5" stroke="#2f7bc2" stroke-width="2.200"/></symbol>
<symbol id="extd" viewBox="0 0 24 24"><path d="M0 12H8" stroke="#555" stroke-width="1.800"/><path d="M9 12H18" stroke="#2f7bc2" stroke-width="1.800" stroke-dasharray="3 1"/><path d="M14 19 23 4" stroke="#2f7bc2" stroke-width="2.200"/></symbol>
<symbol id="brp" viewBox="0 0 24 24"><path d="M1 4H23V21H1Z" fill="url(#g)" stroke="#111" stroke-width="1.600"/><path d="M14 2H19V6H14Z" fill="#1566ad"/></symbol>
<symbol id="brk" viewBox="0 0 24 24"><path d="M6 4H1V21H23V4H18" fill="url(#g)" stroke="#111" stroke-width="1.600"/><path d="M4 2H8V6H4ZM16 2H20V6H16Z" fill="#1566ad"/></symbol>
<symbol id="join" viewBox="0 0 24 24"><path d="M0 12H24" stroke="#111" stroke-width="2"/><path d="M4 7 12 12 4 17ZM20 7 12 12 20 17Z" fill="#24507a"/></symbol>
<symbol id="cham" viewBox="0 0 24 24"><path d="M14 1H24M1 14V24" stroke="#111" stroke-width="2"/><path d="M1 13V1H14" fill="none" stroke="#111" stroke-width="1.600" stroke-dasharray="2 1"/><path d="M1 14 14 1" stroke="#2f7bc2" stroke-width="2"/></symbol>
<symbol id="fil" viewBox="0 0 24 24"><path d="M14 1H24M1 14V24" stroke="#111" stroke-width="2"/><path d="M1 13V1H14" fill="none" stroke="#111" stroke-width="1.600" stroke-dasharray="2 1"/><path d="M1 15Q2 2 14 1" fill="none" stroke="#2f7bc2" stroke-width="2.500"/></symbol>
<symbol id="expl" viewBox="0 0 24 24"><path d="M14 9 19 4 23 3M18 6 22 8M15 4 17 1" stroke="#888" stroke-width="1.800" fill="none"/><path d="M2 12 10 10 16 5 13 12 16 17 8 18 3 23 5 17Z" fill="#f6b43a"/><path d="M1 15 7 19M5 11 13 14M8 18 5 22M11 8 14 11" stroke="#c8352a" stroke-width="2"/><circle cx="9" cy="15" r="2" fill="#c8352a"/></symbol>
<symbol id="o1" viewBox="0 0 24 24"><path d="M1 3H13V12H1ZM12 14H23V22H12Z" fill="url(#g)" stroke="#3a6ea5" stroke-width="1.500"/><path d="M6 6H18V18H6Z" fill="#4f7fb0" stroke="#24507a"/></symbol>
<symbol id="o2" viewBox="0 0 24 24"><path d="M5 6H18V18H5Z" fill="#4f7fb0" stroke="#24507a"/><path d="M1 1H12V10H1ZM12 14H23V23H12Z" fill="url(#g)" stroke="#3a6ea5" stroke-width="1.500"/></symbol>
<symbol id="o3" viewBox="0 0 24 24"><path d="M14 9H23V23H8V16Z" fill="url(#g)" stroke="#3a6ea5" stroke-width="1.500"/><path d="M2 2H18V18H2Z" fill="#4f7fb0" stroke="#24507a" stroke-width="1.500"/></symbol>
<symbol id="dish" viewBox="0 0 24 24"><path d="M3 2Q0 15 13 17L20 14Z" fill="#8fa1c4" stroke="#3c4f80" stroke-width="1.500"/><ellipse cx="12" cy="8" rx="10" ry="4.500" transform="rotate(40 12 8)" fill="#cdd7ec" stroke="#3c4f80"/><path d="M11 9 19 2M10 17 5 23H16Z" fill="#8fa1c4" stroke="#3c4f80" stroke-width="1.300"/></symbol>
<symbol id="ulock" viewBox="0 0 24 24"><path d="M13 11Q11 2 17 2 23 2 22 12" fill="none" stroke="#4e4708" stroke-width="4.500"/><path d="M13 11Q11 2 17 2 23 2 22 11" fill="none" stroke="#dccb3c" stroke-width="1.800"/><path d="M1 9H16V23H1Z" fill="#c9a81c" stroke="#4e4708" stroke-width="1.500"/><path d="M1 12H16M1 16H16M1 20H16" stroke="#6a5a0a"/><path d="M8 10V22" stroke="#fff7a0" stroke-width="3"/></symbol>
<symbol id="std" viewBox="0 0 24 24"><path d="M1 1H12L18 7V22H1Z" fill="#39647f" stroke="#1d4562"/><path d="M6 3V20M12 6V15M3 8H15" stroke="#dfe9ef" stroke-width="2"/><circle cx="16" cy="16" r="7.500" fill="#2ba344"/><path d="M12 16 15 20 21 12" fill="none" stroke="#fff" stroke-width="2.500"/></symbol>
<symbol id="clsc" viewBox="0 0 24 24"><path d="M1 1H23V23H1Z" fill="#d8e7f5" stroke="#1f5a96" stroke-width="2"/><path d="M5 4H20V19H5Z" fill="url(#g)" stroke="#1f5a96" stroke-width="1.500"/></symbol>
</svg>

<div class="wallpaper" aria-hidden="true"><span class="desk-label">D</span><span class="meter"><i></i></span></div>

<div class="window">
<header class="titlebar">
<svg class="app-icon" viewBox="0 0 24 24"><rect width="24" height="24" fill="#1f8a7c"/><path d="M12 0H24V24H12Z" fill="#0f6a60"/><path d="M2 17 7 4 12 17M4 12H10M10 7Q15 8 16 14M13 15H22V22H13ZM19 2V15M0 20H13" fill="none" stroke="#d8fff6" stroke-width="1.800"/></svg>
<h1>AutoCAD 2007 - [D:\cad工作存档\手柄.dwg]</h1>
<div class="win-buttons">
<button aria-label="最小化"><svg viewBox="0 0 16 16"><path d="M0 8.500H15"/></svg></button>
<button aria-label="最大化"><svg viewBox="0 0 16 16"><path d="M.5.500H14.500V14.500H.5Z"/></svg></button>
<button aria-label="关闭"><svg viewBox="0 0 16 16"><path d="M.5.500 15 15M15 .5.500 15"/></svg></button>
</div>
</header>

<nav class="menubar">
<svg class="doc-icon" viewBox="0 0 24 26"><path d="M2 1H15L21 7V24H2Z" fill="#2f5c93"/><path d="M7 1V12M1 6H13" stroke="#cfe2f4" stroke-width="2"/><path d="M1 13 10 15 22 18V25H1Z" fill="#f0c02e"/><path d="M1 24 9 15 22 19V25Z" fill="#fbdc5e"/></svg>
<button>文件(F)</button><button>编辑(E)</button><button>视图(V)</button><button>插入(I)</button><button>格式(O)</button><button>工具(T)</button><button>绘图(D)</button><button>标注(N)</button><button>修改(M)</button><button>窗口(W)</button><button>帮助(H)</button>
<div class="mdi-buttons">
<button aria-label="最小化文档"><svg viewBox="0 0 14 14"><path d="M3 10H11V12H3Z" fill="#7b8794"/></svg></button>
<button aria-label="还原文档"><svg viewBox="0 0 14 14"><path d="M5 5V1H13V8H9M1 6H9V13H1ZM1 7H9M5 2H13" fill="none" stroke="#7b8794" stroke-width="1.500"/></svg></button>
<button aria-label="关闭文档"><svg viewBox="0 0 14 14"><path d="M3 2 11 12M11 2 3 12" stroke="#6d7a88" stroke-width="3"/></svg></button>
</div>
</nav>

<div class="toolbars">
<div class="tb-row">
<div class="toolbar w-view"><i class="grip"></i>
<button class="t" aria-label="命名视图"><svg><use href="#v0"/></svg></button><i class="s"></i>
<button class="t" aria-label="俯视"><svg><use href="#v1"/></svg></button><button class="t" aria-label="仰视"><svg><use href="#v2"/></svg></button><button class="t" aria-label="左视"><svg><use href="#v3"/></svg></button><button class="t" aria-label="右视"><svg><use href="#v4"/></svg></button><button class="t" aria-label="主视"><svg><use href="#v5"/></svg></button><button class="t" aria-label="后视"><svg><use href="#v6"/></svg></button><i class="s"></i>
<button class="t" aria-label="西南等轴测"><svg><use href="#v7"/></svg></button><button class="t" aria-label="东南等轴测"><svg><use href="#v8"/></svg></button><button class="t" aria-label="东北等轴测"><svg><use href="#v9"/></svg></button><button class="t" aria-label="西北等轴测"><svg><use href="#v10"/></svg></button><i class="s"></i>
<button class="t" aria-label="创建相机"><svg><use href="#cam"/></svg></button><i class="s"></i>
<button class="t" aria-label="上一视图"><svg><use href="#prev"/></svg></button>
<span class="combo c-prev off"><select aria-label="视图列表" disabled><option></option></select></span>
</div>
</div>

<div class="tb-row">
<div class="toolbar w-style"><i class="grip"></i>
<button class="t" aria-label="文字样式"><svg viewBox="0 0 24 24"><text x="1" y="18" font-size="21" font-family="Liberation Sans" fill="#111">A</text><use href="#brush" x="5" y="7" width="18" height="18"/></svg></button><span class="combo c-std"><select aria-label="文字样式列表"><option>Standard</option></select></span><i class="s"></i>
<button class="t" aria-label="标注样式"><svg><use href="#dstyle"/></svg></button><span class="combo c-std"><select aria-label="标注样式列表"><option>ISO-25</option></select></span><i class="s"></i>
<button class="t" aria-label="表格样式"><svg><use href="#tbstyle"/></svg></button><span class="combo c-std"><select aria-label="表格样式列表"><option>Standard</option></select></span>
</div>
<div class="toolbar w-orbit"><i class="grip"></i>
<button class="t" aria-label="受约束的动态观察"><svg><use href="#orb1"/></svg></button><button class="t" aria-label="自由动态观察"><svg><use href="#orb2"/></svg></button><button class="t" aria-label="连续动态观察"><svg><use href="#orb3"/></svg></button>
</div>
<div class="toolbar w-visual"><i class="grip"></i>
<button class="t" aria-label="二维线框"><svg><use href="#s2d"/></svg></button><i class="s"></i>
<button class="t" aria-label="三维线框"><svg><use href="#s3d"/></svg></button><button class="t" aria-label="三维隐藏"><svg><use href="#shid"/></svg></button><button class="t" aria-label="真实"><svg><use href="#sreal"/></svg></button><button class="t" aria-label="概念"><svg><use href="#scon"/></svg></button><i class="s"></i>
<button class="t" aria-label="管理视觉样式"><svg><use href="#sman"/></svg></button>
</div>
</div>

<div class="tb-row">
<div class="toolbar w-main"><i class="grip"></i>
<button class="t" aria-label="新建"><svg><use href="#new"/></svg></button><button class="t" aria-label="打开"><svg><use href="#open"/></svg></button><button class="t" aria-label="保存"><svg><use href="#save"/></svg></button><i class="s"></i>
<button class="t" aria-label="打印"><svg><use href="#print"/></svg></button><button class="t" aria-label="打印预览"><svg><use href="#preview"/></svg></button><button class="t" aria-label="发布"><svg><use href="#publish"/></svg></button><button class="t" aria-label="三维 DWF"><svg><use href="#globe"/></svg></button><i class="s"></i>
<button class="t" aria-label="剪切"><svg><use href="#cut"/></svg></button><button class="t" aria-label="复制"><svg><use href="#copy"/></svg></button><button class="t" aria-label="粘贴"><svg><use href="#paste"/></svg></button><button class="t" aria-label="特性匹配"><svg><use href="#brush"/></svg></button><button class="t" aria-label="块编辑器"><svg><use href="#block"/></svg></button><i class="s"></i>
<button class="t" aria-label="放弃"><svg><use href="#undo"/></svg></button><button class="n" aria-label="放弃列表"><svg><use href="#drop"/></svg></button><button class="t" aria-label="重做"><svg><use href="#redo"/></svg></button><button class="n dim" aria-label="重做列表"><svg><use href="#drop"/></svg></button><i class="s"></i>
<button class="t" aria-label="实时平移"><svg><use href="#pan"/></svg></button><button class="t" aria-label="实时缩放"><svg><use href="#zrt"/></svg></button><button class="t" aria-label="窗口缩放"><svg><use href="#zwin"/></svg></button><button class="t" aria-label="缩放上一个"><svg><use href="#zprev"/></svg></button><i class="s"></i>
<button class="t" aria-label="特性"><svg viewBox="0 0 24 24"><use href="#props"/><text x="14" y="24" font-size="12" font-family="Liberation Serif" fill="#234">A</text></svg></button><button class="t" aria-label="设计中心"><svg><use href="#dc"/></svg></button><button class="t" aria-label="工具选项板"><svg><use href="#tp"/></svg></button><button class="t" aria-label="图纸集管理器"><svg><use href="#ssm"/></svg></button><button class="t" aria-label="标记集管理器"><svg><use href="#markup"/></svg></button><button class="t" aria-label="快速计算器"><svg><use href="#calc"/></svg></button><i class="s"></i>
<button class="t" aria-label="帮助"><svg viewBox="0 0 24 24"><use href="#help"/><text x="12" y="20" font-size="21" text-anchor="middle" font-weight="700" font-family="Liberation Sans" fill="#fff">?</text></svg></button>
</div>
<div class="toolbar w-solid"><i class="grip"></i>
<button class="t" aria-label="并集"><svg><use href="#uni"/></svg></button><button class="t" aria-label="差集"><svg><use href="#sub"/></svg></button><button class="t" aria-label="交集"><svg><use href="#inter"/></svg></button><i class="s"></i>
<button class="t" aria-label="拉伸面"><svg><use href="#ext"/></svg></button><button class="t" aria-label="移动面"><svg><use href="#mvf"/></svg></button><button class="t" aria-label="偏移面"><svg><use href="#off"/></svg></button><button class="t" aria-label="删除面"><svg><use href="#del"/></svg></button><button class="t" aria-label="旋转面"><svg><use href="#rotf"/></svg></button><button class="t" aria-label="倾斜面"><svg><use href="#tap"/></svg></button><button class="t" aria-label="复制面"><svg><use href="#cpf"/></svg></button><button class="t" aria-label="着色面"><svg><use href="#clf"/></svg></button><i class="s"></i>
<button class="t" aria-label="复制边"><svg><use href="#cpe"/></svg></button><button class="t" aria-label="着色边"><svg><use href="#cle"/></svg></button><i class="s"></i>
<button class="t" aria-label="压印"><svg><use href="#imp"/></svg></button><button class="t" aria-label="清除"><svg><use href="#clean"/></svg></button><button class="t" aria-label="分割"><svg><use href="#sep"/></svg></button><button class="t" aria-label="抽壳"><svg><use href="#shell"/></svg></button><button class="t" aria-label="检查"><svg><use href="#check"/></svg></button>
</div>
</div>

<div class="tb-row">
<div class="toolbar w-space"><i class="grip"></i>
<span class="combo c-space"><select aria-label="工作空间"><option>AutoCAD 经典</option></select></span>
<button class="t" aria-label="工作空间设置"><svg><use href="#gear"/></svg></button><button class="t" aria-label="我的工作空间"><svg><use href="#home"/></svg></button>
</div>
<div class="toolbar w-dim"><i class="grip"></i>
<button class="t" aria-label="线性"><svg><use href="#dlin"/></svg></button><button class="t" aria-label="对齐"><svg><use href="#dali"/></svg></button><button class="t" aria-label="弧长"><svg><use href="#darc"/></svg></button><button class="t" aria-label="坐标"><svg><use href="#dord"/></svg></button><i class="s"></i>
<button class="t" aria-label="半径"><svg><use href="#drad"/></svg></button><button class="t" aria-label="折弯"><svg><use href="#djog"/></svg></button><button class="t" aria-label="直径"><svg><use href="#ddia"/></svg></button><button class="t" aria-label="角度"><svg><use href="#dang"/></svg></button><i class="s"></i>
<button class="t" aria-label="快速标注"><svg><use href="#dq"/></svg></button><button class="t" aria-label="基线"><svg><use href="#dbas"/></svg></button><button class="t" aria-label="连续"><svg><use href="#dcon"/></svg></button><i class="s"></i>
<button class="t" aria-label="快速引线"><svg viewBox="0 0 24 24"><use href="#lead"/><text x="16" y="9" font-size="10" font-weight="700" font-family="Liberation Sans" fill="#1d5f9e">A</text></svg></button><button class="t" aria-label="公差"><svg><use href="#tol"/></svg></button><button class="t" aria-label="圆心标记"><svg><use href="#cmk"/></svg></button><i class="s"></i>
<button class="t" aria-label="编辑标注"><svg viewBox="0 0 24 24"><use href="#db"/><text x="12" y="13" font-size="17" text-anchor="middle" font-weight="700" font-family="Liberation Sans" fill="#1d5f9e">A</text></svg></button><button class="t" aria-label="编辑标注文字"><svg><use href="#dte"/></svg></button><button class="t" aria-label="标注更新"><svg><use href="#dup"/></svg></button><i class="s"></i>
<span class="combo c-std"><select aria-label="当前标注样式"><option>ISO-25</option></select></span>
<button class="t" aria-label="标注样式管理"><svg><use href="#dstyle"/></svg></button>
</div>
<div class="toolbar w-layer"><i class="grip"></i>
<button class="t" aria-label="图层特性管理器"><svg><use href="#lay"/></svg></button>
<span class="combo c-layer"><svg><use href="#bulb"/></svg><svg><use href="#sun"/></svg><svg><use href="#fvp"/></svg><svg><use href="#lock"/></svg><i class="swatch"></i><select aria-label="图层"><option>0</option></select></span>
<button class="t" aria-label="将对象的图层置为当前"><svg><use href="#laym"/></svg></button><button class="t" aria-label="上一个图层"><svg><use href="#layp"/></svg></button>
</div>
<div class="toolbar w-color"><i class="grip"></i>
<span class="combo c-color"><i class="swatch"></i><select aria-label="颜色"><option>ByLayer</option></select></span>
</div>
</div>
</div>

<main class="workspace">
<aside class="dock">
<div class="vbar"><i class="hgrip"></i>
<button aria-label="直线"><svg><use href="#line"/></svg></button><button aria-label="构造线"><svg><use href="#xline"/></svg></button><button aria-label="多段线"><svg><use href="#pline"/></svg></button><button aria-label="正多边形"><svg><use href="#poly"/></svg></button><button aria-label="矩形"><svg><use href="#rect"/></svg></button><button aria-label="圆弧"><svg><use href="#arc"/></svg></button><button aria-label="圆"><svg><use href="#circ"/></svg></button><button aria-label="修订云线"><svg><use href="#cloud"/></svg></button><button aria-label="样条曲线"><svg><use href="#spl"/></svg></button><button aria-label="椭圆"><svg><use href="#ell"/></svg></button><button aria-label="椭圆弧"><svg><use href="#ella"/></svg></button><button aria-label="插入块"><svg><use href="#ins"/></svg></button><button aria-label="创建块"><svg><use href="#mk"/></svg></button><button aria-label="点"><svg><use href="#pt"/></svg></button><button aria-label="图案填充"><svg><use href="#hat"/></svg></button><button aria-label="渐变色"><svg><use href="#grad"/></svg></button><button aria-label="面域"><svg><use href="#reg"/></svg></button><button aria-label="表格"><svg><use href="#tab"/></svg></button><button class="mtext">A</button>
</div>
</aside>

<section class="document">
<div class="canvas">
<svg class="drawing" viewBox="57 251 1803 662" preserveAspectRatio="xMidYMid meet" role="img" aria-label="手柄三维模型">
<defs>
<linearGradient id="m1" x1="0" y1="0" x2="0" y2="1"><stop offset="0" stop-color="#77787e"/><stop offset=".3" stop-color="#818382"/><stop offset=".55" stop-color="#77787a"/><stop offset=".8" stop-color="#65646f"/><stop offset="1" stop-color="#51505f"/></linearGradient>
<linearGradient id="m2" x1="0" y1="0" x2="0" y2="1"><stop offset="0" stop-color="#7b7c80"/><stop offset=".35" stop-color="#838583"/><stop offset=".6" stop-color="#777879"/><stop offset=".8" stop-color="#68686e"/><stop offset="1" stop-color="#525263"/></linearGradient>
<linearGradient id="m3" x1="0" y1="0" x2="1" y2="0"><stop offset="0" stop-color="#75767b"/><stop offset=".35" stop-color="#7d7e7f"/><stop offset=".7" stop-color="#696974"/><stop offset="1" stop-color="#4d4b60"/></linearGradient>
<linearGradient id="m4" x1="0" y1="0" x2="1" y2="0"><stop offset="0" stop-color="#56556a" stop-opacity=".7"/><stop offset=".6" stop-color="#6c6c76" stop-opacity=".2"/><stop offset="1" stop-color="#888" stop-opacity="0"/></linearGradient>
<linearGradient id="m5" x1="0" y1="0" x2="1" y2="0"><stop offset=".4" stop-color="#50506a" stop-opacity="0"/><stop offset="1" stop-color="#4e4d62" stop-opacity=".4"/></linearGradient>
<linearGradient id="m6" x1="0" y1="0" x2="1" y2="1"><stop offset="0" stop-color="#6d6d75"/><stop offset=".5" stop-color="#65646f"/><stop offset="1" stop-color="#4a4a60"/></linearGradient>
</defs>
<g stroke="#0c0c0c" stroke-width="1.500" stroke-linejoin="round">
<path d="M706 499H878V697H706Z" fill="url(#m1)"/>
<path d="M705 515V620M708 570V697" fill="none"/>
<path d="M760 288V508Q762 524 780 528 800 532 820 526 838 518 840 504V288Z" fill="url(#m3)" stroke="none"/>
<path d="M760 288V507M840 288V507" fill="none"/>
<path d="M760 288 764 279 778 275 790 273H812L828 276 837 281 840 289 836 297 818 302 800 304 780 301 764 295Z" fill="#7a7b7d"/>
<path d="M878 456H954V741H879Z" fill="url(#m1)"/>
<path d="M954 457 965 466 999 485 1040 492 1085 485 1098 478V713L1085 709 1042 701 1000 709 965 729 954 741Z" fill="url(#m1)"/>
<path d="M954 457 965 466 999 485 1040 492 1085 485 1098 478V713L1085 709 1042 701 1000 709 965 729 954 741Z" fill="url(#m4)"/>
<path d="M1098 478 1161 454 1246 430 1332 424 1420 430 1506 452 1587 487 1614 504V688L1570 711 1506 739 1420 762 1334 768 1246 761 1161 740 1098 713Z" fill="url(#m2)"/>
<path d="M1098 478 1161 454 1246 430 1332 424 1420 430 1506 452 1587 487 1614 504V688L1570 711 1506 739 1420 762 1334 768 1246 761 1161 740 1098 713Z" fill="url(#m5)"/>
<path d="M1614 504 1648 536 1660 568V620L1648 652 1614 688Z" fill="url(#m6)"/>
</g>
<rect x="1144" y="292" width="9" height="9" fill="none" stroke="#1b9a2a" stroke-width="1.500"/><path d="M1143 297H1148" stroke="#a33"/>
<g class="ucs">
<ellipse cx="110" cy="847" rx="7" ry="6" fill="#0ba62a"/>
<path d="M112 861H144" stroke="#c81414" stroke-width="4"/><path d="M143 855 164 861 143 867Z" fill="#d40f0f"/>
<path d="M110 862V828" stroke="#1b8fe8" stroke-width="3"/><path d="M110 814 117 832H103Z" fill="#1b8fe8"/>
<path d="M110 816V858" stroke="#0b5c9e"/>
<text x="112" y="809" fill="#2f8fe8">Z</text><text x="114" y="834" fill="#2bd04a">Y</text><text x="159" y="853" fill="#e02020">X</text>
</g>
</svg>
</div>
<div class="tabs">
<button class="nav" aria-label="第一个"><svg viewBox="0 0 16 16"><path d="M3 2V14M5 8 12 2V14Z"/></svg></button><button class="nav" aria-label="上一个"><svg viewBox="0 0 16 16"><path d="M5 8 11 2V14Z"/></svg></button><button class="nav" aria-label="下一个"><svg viewBox="0 0 16 16"><path d="M11 8 5 2V14Z"/></svg></button><button class="nav" aria-label="最后一个"><svg viewBox="0 0 16 16"><path d="M13 2V14M11 8 4 2V14Z"/></svg></button>
<button class="tab active"><svg viewBox="0 0 64 22" preserveAspectRatio="none"><path d="M0 0 8 21H56L64 0Z"/><path d="M4 0 12 20"/></svg><span>模型</span></button><button class="tab"><svg viewBox="0 0 64 22" preserveAspectRatio="none"><path d="M0 0 8 21H56L64 0"/></svg><span>布局1</span></button><button class="tab"><svg viewBox="0 0 64 22" preserveAspectRatio="none"><path d="M0 0 8 21H56L64 0"/></svg><span>布局2</span></button>
</div>
</section>

<aside class="dock right">
<div class="vbar"><i class="hgrip"></i>
<button aria-label="删除"><svg><use href="#erase"/></svg></button><button aria-label="复制对象"><svg><use href="#cpy"/></svg></button><button aria-label="镜像"><svg><use href="#mir"/></svg></button><button aria-label="偏移"><svg><use href="#offs"/></svg></button><button aria-label="阵列"><svg><use href="#arr"/></svg></button><button aria-label="移动"><svg><use href="#move"/></svg></button><button aria-label="旋转"><svg><use href="#rot"/></svg></button><button aria-label="缩放"><svg><use href="#scl"/></svg></button><button aria-label="拉伸"><svg><use href="#str"/></svg></button><button aria-label="修剪"><svg><use href="#trim"/></svg></button><button aria-label="延伸"><svg><use href="#extd"/></svg></button><button aria-label="打断于点"><svg><use href="#brp"/></svg></button><button aria-label="打断"><svg><use href="#brk"/></svg></button><button aria-label="合并"><svg><use href="#join"/></svg></button><button aria-label="倒角"><svg><use href="#cham"/></svg></button><button aria-label="圆角"><svg><use href="#fil"/></svg></button><button aria-label="分解"><svg><use href="#expl"/></svg></button>
</div>
<div class="vbar"><i class="hgrip"></i>
<button aria-label="前置"><svg><use href="#o1"/></svg></button><button aria-label="后置"><svg><use href="#o2"/></svg></button><button aria-label="置于对象之上"><svg><use href="#o3"/></svg></button>
</div>
</aside>
</main>

<section class="command">
<i class="grip"></i>
<div class="console">
<div class="history">
<p><b>输入选项</b> [<b>二维线框</b>(2)/<b>三维线框</b>(3)/<b>三维隐藏</b>(H)/<b>真实</b>(R)/<b>概念</b>(C)/<b>其他</b>(O)] &lt;<b>二维线框</b>&gt;: _C</p>
<div class="vscroll"><button aria-label="向上滚动"><svg viewBox="0 0 14 14"><path d="M2 11 7 4 12 11"/></svg></button><button aria-label="向下滚动"><svg viewBox="0 0 14 14"><path d="M2 3 7 10 12 3"/></svg></button></div>
</div>
<div class="prompt">
<label for="cmd"><b>命令</b>:</label><input id="cmd" type="text">
<div class="hscroll"><button aria-label="向左滚动"><svg viewBox="0 0 14 14"><path d="M10 2 4 7 10 12"/></svg></button><i class="thumb"></i><button class="end" aria-label="向右滚动"><svg viewBox="0 0 14 14"><path d="M4 2 10 7 4 12"/></svg></button></div>
</div>
</div>
</section>

<footer class="status">
<output class="coords">4419.8388, 12.8078&nbsp; , 0.0000</output>
<button>捕捉</button><button>栅格</button><button class="on">正交</button><button>极轴</button><button class="on">对象捕捉</button><button>对象追踪</button><button class="on latin">DUCS</button><button class="on latin">DYN</button><button>线宽</button><button class="on">模型</button>
<div class="tray"><svg><use href="#dish"/></svg><svg><use href="#ulock"/></svg><svg><use href="#std"/></svg></div>
<button class="ico menu" aria-label="状态栏菜单"><svg viewBox="0 0 12 8"><path d="M0 0H12L6 7Z"/></svg></button>
<button class="ico" aria-label="清除屏幕"><svg><use href="#clsc"/></svg></button>
<svg class="resize" viewBox="0 0 14 14"><path d="M10 0H13V3H10ZM5 5H8V8H5ZM10 5H13V8H10ZM0 10H3V13H0ZM5 10H8V13H5ZM10 10H13V13H10Z" fill="#bbb"/></svg>
</footer>
</div>
</body>
</html>
```
FILE: styles.css
```css
* { box-sizing: border-box; }

html, body { margin: 0; height: 100%; }

body {
  overflow: hidden;
  display: flex;
  position: relative;
  background: linear-gradient(#15181c 0, #16191d 30%, #181715 45%, #22170f 56%, #26150d 65%, #020202 67%, #000 100%);
  border-bottom: 2px solid #c9c9c9;
  color: #000;
  font-family: "Open Sans", "Noto Sans CJK SC", sans-serif;
  font-size: 18px;
}

button, select, input {
  margin: 0;
  padding: 0;
  border: 0;
  background: none;
  color: inherit;
  font: inherit;
}

svg { display: block; }

.sprite { position: absolute; width: 0; height: 0; }

/* desktop behind the window */
.wallpaper { position: absolute; inset: 0; }
.desk-label {
  position: absolute;
  left: 5px;
  top: 840px;
  color: #ddd;
  font-size: 16px;
  width: 10px;
}
.meter {
  position: absolute;
  right: 1px;
  top: 377px;
  width: 10px;
  height: 59px;
  padding: 34px 2px 2px;
  border: 1px solid #a9a9a9;
  border-radius: 4px;
  background: #0a0a0a;
}
.meter i {
  display: block;
  height: 100%;
  background: repeating-linear-gradient(#5fd077 0 1px, #1f6a2f 1px 2px);
}

.window {
  position: relative;
  flex: 1;
  min-width: 0;
  margin: 4px 16px 12px 15px;
  display: flex;
  flex-direction: column;
  overflow: hidden;
  background: #f0f0f0;
}

/* title bar */
.titlebar {
  display: flex;
  align-items: center;
  height: 47px;
  padding-left: 12px;
  background: #fff;
  border-bottom: 1px solid #cfcfcf;
}
.titlebar h1 {
  flex: 1;
  margin: 0 0 3px 7px;
  font-size: 19px;
  line-height: 28px;
  font-weight: 400;
}
.app-icon { width: 22px; height: 22px; }
.win-buttons { display: flex; }
.win-buttons button {
  width: 70px;
  height: 44px;
  display: grid;
  place-items: center;
}
.win-buttons svg {
  width: 16px;
  height: 16px;
  fill: none;
  stroke: #000;
}

/* menu bar */
.menubar {
  display: flex;
  align-items: center;
  height: 28px;
  padding-left: 12px;
  background: #fff;
}
.doc-icon { width: 24px; height: 26px; margin-right: 9px; }
.menubar > button {
  margin: 0 23px 2px 0;
  white-space: nowrap;
  line-height: 24px;
}
.mdi-buttons { display: flex; gap: 3px; margin-left: auto; padding-right: 2px; }
.mdi-buttons button {
  width: 26px;
  height: 26px;
  display: grid;
  place-items: center;
  border: 1px solid #eee;
}
.mdi-buttons svg { width: 14px; height: 14px; }

/* toolbars */
.toolbars { padding-top: 3px; }
.tb-row { display: flex; gap: 3px; height: 42px; padding-bottom: 2px; }
.toolbar {
  flex: none;
  display: flex;
  align-items: center;
  padding: 2px 5px 0;
  border-top: 1px solid #fff;
  border-right: 2px solid #b4b4b4;
  border-bottom: 2px solid #b4b4b4;
}
.w-view { width: 720px; }
.w-style { width: 598px; }
.w-orbit { width: 128px; }
.w-visual { width: 250px; }
.w-main { width: 983px; }
.w-solid { width: 671px; }
.w-space { width: 359px; }
.w-dim { width: 840px; }
.w-layer { width: 578px; }
.w-color { flex: 1; min-width: 0; overflow: hidden; border-right: 0; }

.grip {
  flex: none;
  width: 10px;
  align-self: stretch;
  margin-right: 4px;
  background: linear-gradient(90deg, #fff 0 3px, #a8a8a8 3px 4px, #f0f0f0 4px 5px, #fff 5px 8px, #a8a8a8 8px 9px, #f0f0f0 9px);
}
.w-dim .grip, .w-color .grip { margin-right: 2px; }
.t {
  flex: 1 1 34px;
  min-width: 0;
  height: 34px;
  display: grid;
  place-items: center;
}
.t svg { width: 24px; height: 24px; }
.n { flex: none; width: 18px; color: #10106a; }
.n.dim { color: #b5b5b5; }
.n svg { width: 18px; height: 18px; }
.s {
  flex: none;
  width: 1px;
  height: 28px;
  margin: 0 4px;
  background: #888;
}

.combo {
  flex: none;
  position: relative;
  display: flex;
  align-items: center;
  height: 33px;
  border: 2px solid #868686;
  background: #fff;
  font-family: "Liberation Mono", "Noto Sans CJK SC", monospace;
  font-size: 15px;
}
.combo::after {
  content: "";
  position: absolute;
  right: 7px;
  top: 8px;
  width: 9px;
  height: 9px;
  border: solid #777;
  border-width: 0 2px 2px 0;
  transform: rotate(45deg);
  pointer-events: none;
}
.combo select {
  flex: 1;
  min-width: 0;
  height: 100%;
  padding: 0 24px 0 5px;
  appearance: none;
}
.combo svg { flex: none; width: 24px; height: 24px; }
.c-prev { width: 209px; }
.c-std { width: 150px; }
.c-space { width: 262px; font-size: 16px; }
.c-space select { padding-left: 11px; }
.c-layer { width: 450px; padding-left: 3px; }
.c-color { width: 240px; padding-left: 7px; }
.combo.off { border: 1px solid #ccc; background: linear-gradient(90deg, #efefef 180px, #fff 180px); }
.combo.off::after { border-color: #bbb; }
.swatch {
  flex: none;
  width: 15px;
  height: 15px;
  border: 2px solid #000;
}
.c-layer .swatch { margin-left: 4px; }

/* main area */
.workspace {
  flex: 1;
  min-height: 0;
  display: grid;
  grid-template-columns: 40px 1fr 42px;
  border-bottom: 4px solid #fff;
}
.dock {
  min-height: 0;
  overflow: hidden;
  border-right: 1px solid #fff;
}
.dock.right { padding-left: 6px; border-right: 0; }
.vbar {
  display: flex;
  flex-direction: column;
  align-items: center;
  padding-bottom: 8px;
  border-right: 2px solid #b4b4b4;
  border-bottom: 2px solid #b4b4b4;
}
.hgrip {
  width: 30px;
  height: 10px;
  margin: 3px 0 1px;
  background: linear-gradient(#fff 0 3px, #a8a8a8 3px 4px, #f0f0f0 4px 5px, #fff 5px 8px, #a8a8a8 8px 9px, #f0f0f0 9px);
}
.vbar button {
  flex: none;
  width: 34px;
  height: 33px;
  display: grid;
  place-items: center;
}
.vbar svg { width: 24px; height: 24px; }
.vbar .mtext { font: 700 25px/33px "Liberation Sans", sans-serif; color: #222; }

.document { display: flex; flex-direction: column; min-width: 0; min-height: 0; }
.canvas {
  flex: 1;
  min-height: 0;
  display: flex;
  border-top: 2px solid #747474;
  border-left: 2px solid #747474;
  border-right: 2px solid #000;
  border-bottom: 3px solid #000;
  background: #c1c1c1;
}
.drawing { width: 100%; height: 100%; }
.ucs text { font: 14px "Liberation Sans", sans-serif; }

.tabs { display: flex; height: 25px; border-right: 1px solid #fff; }
.nav {
  width: 27px;
  height: 21px;
  display: grid;
  place-items: center;
  border-right: 1px solid #bbb;
  border-bottom: 1px solid #bbb;
}
.nav svg { width: 16px; height: 16px; stroke: #000; }
.tab {
  position: relative;
  width: 65px;
  height: 22px;
  margin-right: -2px;
}
.tab svg {
  position: absolute;
  inset: 0;
  width: 100%;
  height: 100%;
  fill: #f0f0f0;
  stroke: #000;
  stroke-width: 2;
}
.tab.active { z-index: 1; margin-left: 6px; width: 60px; color: #fff; }
.tab.active svg { fill: #000; }
.tab.active svg path + path { stroke: #fff; stroke-width: 1; }
.tab span {
  position: relative;
  display: block;
  line-height: 20px;
  padding-bottom: 2px;
  font-family: "Noto Sans CJK SC", sans-serif;
  white-space: nowrap;
}

/* command window */
.command {
  display: flex;
  height: 85px;
  padding: 14px 12px 3px 10px;
  border-top: 3px solid #838383;
  color: #222;
  font-family: "Liberation Mono", monospace;
  font-size: 20px;
}
.command b { font: 400 24px/20px "Noto Sans CJK SC", sans-serif; }
.command .grip { height: 62px; margin-right: 5px; }
.console { flex: 1; min-width: 0; border-left: 2px solid #777; }
.history {
  display: flex;
  height: 38px;
  border-top: 3px solid #777;
  border-bottom: 2px solid #aaa;
  background: #fff;
}
.history p {
  flex: 1;
  min-width: 0;
  margin: 0;
  line-height: 20px;
  white-space: pre;
}
.vscroll { width: 24px; padding: 2px 0; background: #f0f0f0; }
.vscroll button {
  width: 24px;
  height: 15px;
  display: grid;
  place-items: center;
}
.console svg { width: 12px; height: 12px; fill: none; stroke: #555; stroke-width: 3; }
.prompt {
  display: flex;
  align-items: center;
  height: 27px;
  margin-right: 25px;
  background: #fff;
}
.prompt input { flex: 1; min-width: 0; height: 26px; outline: 0; }
.hscroll {
  display: flex;
  align-items: center;
  width: 104px;
  height: 27px;
  padding: 2px 6px;
  background: #f0f0f0;
}
.hscroll button { width: 23px; height: 24px; display: grid; place-items: center; }
.thumb { width: 25px; height: 24px; background: #cdcdcd; }
.hscroll .end { margin-left: auto; }

/* status bar */
.status {
  display: flex;
  align-items: center;
  height: 36px;
  padding: 4px 2px 0 8px;
  border-top: 2px solid #b0b0b0;
  font-family: "Noto Sans CJK SC", sans-serif;
}
.coords {
  width: 278px;
  height: 26px;
  margin-right: 7px;
  padding-left: 1px;
  border: 2px solid #b4b4b4;
  border-right-color: #ccc;
  border-bottom-color: #ccc;
  font: 15px/25px "Liberation Mono", monospace;
  white-space: nowrap;
}
.status > button {
  height: 26px;
  margin-right: 5px;
  padding: 0 2px;
  border: 1px solid #fff;
  border-right: 2px solid #aaa;
  border-bottom: 2px solid #aaa;
  line-height: 22px;
}
.status > .on {
  padding: 0 2px;
  border: 2px solid #000;
  border-right: 1px solid #ddd;
  border-bottom: 1px solid #ddd;
}
.status > .latin { font: 15px/24px "Liberation Mono", monospace; }
.tray {
  display: flex;
  gap: 6px;
  align-items: center;
  width: 95px;
  height: 27px;
  margin-left: auto;
  padding-left: 6px;
  border: 2px solid #a8a8a8;
  border-right-color: #fff;
  border-bottom-color: #fff;
}
.tray svg, .ico svg { width: 24px; height: 24px; }
.status > .ico { margin: 0; padding: 0; border: 0; }
.status > .menu { display: flex; align-items: flex-end; padding: 0 13px 4px 8px; }
.menu svg { width: 12px; height: 8px; }
.resize { width: 14px; height: 14px; margin: 10px 0 0 9px; }
```
